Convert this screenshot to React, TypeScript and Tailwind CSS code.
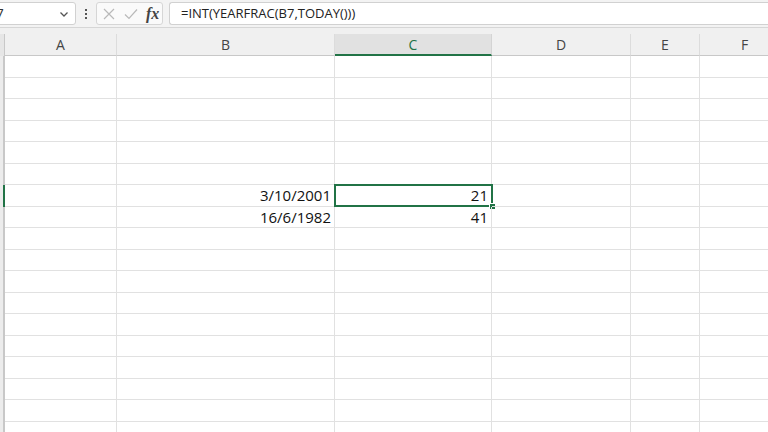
import React from "react";

const cols = [
  { key: "A", w: "w-[112px]" },
  { key: "B", w: "w-[218px]" },
  { key: "C", w: "w-[157px]" },
  { key: "D", w: "w-[139px]" },
  { key: "E", w: "w-[69px]" },
  { key: "F", w: "w-[90px]" },
];

const rows: Record<number, Record<string, string>> = {
  6: { B: "3/10/2001", C: "21" },
  7: { B: "16/6/1982", C: "41" },
};

function FormulaBar() {
  return (
    <div className="flex h-[28px] items-center border-b border-[#d6d6d6] bg-[#f3f3f3]">
      <div className="-ml-[20px] flex h-[23px] w-[96px] items-center justify-between rounded-[3px] border border-[#d1d1d1] bg-white pl-[6px] pr-[5px] text-[14px] text-[#333]">
        <span>C7</span>
        <svg width="12" height="12" viewBox="0 0 12 12" fill="none" stroke="#555" strokeWidth="1.3">
          <path d="M2.5 4.5 L6 8 L9.5 4.5" />
        </svg>
      </div>
      <div className="flex w-[20px] flex-col items-center justify-center gap-[2px]">
        <span className="h-[2px] w-[2px] bg-[#555]" />
        <span className="h-[2px] w-[2px] bg-[#555]" />
        <span className="h-[2px] w-[2px] bg-[#555]" />
      </div>
      <div className="flex h-[23px] w-[67px] items-center rounded-[3px] border border-[#d6d6d6] bg-[#fafafa] pl-[4px]">
        <svg width="16" height="16" viewBox="0 0 16 16" fill="none" stroke="#b9b9b9" strokeWidth="1.2">
          <path d="M3 3 L13 13 M13 3 L3 13" />
        </svg>
        <svg className="ml-[6px]" width="16" height="16" viewBox="0 0 16 16" fill="none" stroke="#b9b9b9" strokeWidth="1.2">
          <path d="M2 8.5 L6 12.5 L14 3.5" />
        </svg>
        <span className="ml-[7px] text-[16px] font-bold italic text-[#444] [font-family:'Liberation_Serif',serif]">
          fx
        </span>
      </div>
      <div className="ml-[6px] flex h-[23px] flex-1 items-center rounded-l-[3px] border border-r-0 border-[#d1d1d1] bg-white pl-[11px] text-[13px] text-[#222]">
        =INT(YEARFRAC(B7,TODAY()))
      </div>
    </div>
  );
}

function HeaderRow() {
  return (
    <div className="flex h-[28px] bg-[#f0f0f0] pt-[6px]">
      <div className="w-[5px] shrink-0 border-r border-[#c8c8c8] bg-[#e6e6e6]" />
      {cols.map((c) => (
        <div
          key={c.key}
          className={`${c.w} flex shrink-0 items-center justify-center border-r ${
            c.key === "C"
              ? "border-b-2 border-b-[#217346] border-r-[#d4d4d4] bg-[#e1e1e1] text-[#217346]"
              : "border-b border-b-[#c8c8c8] border-r-[#dcdcdc] text-[#444]"
          } text-[14px]`}
        >
          {c.key}
        </div>
      ))}
    </div>
  );
}

function Grid() {
  return (
    <div>
      {Array.from({ length: 18 }).map((_, r) => (
        <div key={r} className="flex h-[21.5px]">
          <div
            className={`w-[5px] shrink-0 border-r-2 bg-[#ececec] ${
              r === 6 ? "border-r-[#217346]" : "border-r-[#c8c8c8]"
            }`}
          />
          {cols.map((c) => {
            const v = rows[r]?.[c.key];
            const active = r === 6 && c.key === "C";
            return (
              <div
                key={c.key}
                className={`${c.w} relative flex shrink-0 items-center justify-end border-r border-b border-[#e1e1e1] pr-[3px] text-[15px] text-[#111]`}
              >
                {active && (
                  <div className="absolute -left-[1px] -top-[1px] h-[23px] w-[159px] border-2 border-[#217346]">
                    <div className="absolute -bottom-[5px] -right-[5px] h-[7px] w-[7px] border border-white bg-[#217346]" />
                  </div>
                )}
                {v && <span className="relative">{v}</span>}
              </div>
            );
          })}
        </div>
      ))}
    </div>
  );
}

export default function App() {
  return (
    <div className="h-[432px] w-[768px] overflow-hidden bg-white [font-family:'Open_Sans','Noto_Sans',sans-serif]">
      <FormulaBar />
      <HeaderRow />
      <Grid />
    </div>
  );
}
